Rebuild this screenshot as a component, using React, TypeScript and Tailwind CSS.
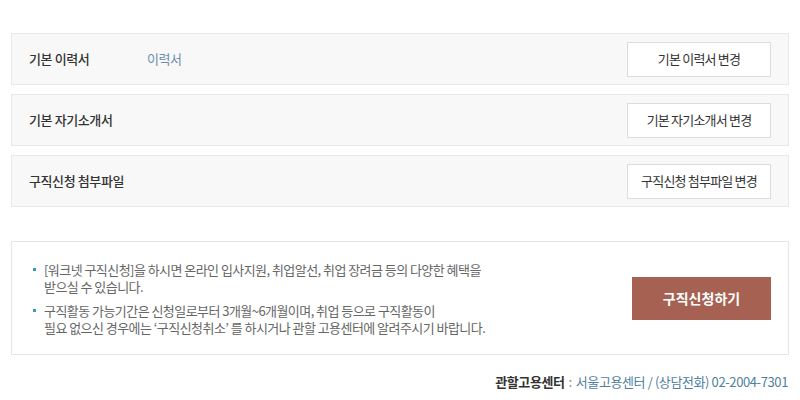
const rows = [
  { label: '기본 이력서', link: '이력서', button: '기본 이력서 변경' },
  { label: '기본 자기소개서', link: '', button: '기본 자기소개서 변경' },
  { label: '구직신청 첨부파일', link: '', button: '구직신청 첨부파일 변경' },
];

const notices = [
  [
    '[워크넷 구직신청]을 하시면 온라인 입사지원, 취업알선, 취업 장려금 등의 다양한 혜택을',
    '받으실 수 있습니다.',
  ],
  [
    '구직활동 가능기간은 신청일로부터 3개월~6개월이며, 취업 등으로 구직활동이',
    '필요 없으신 경우에는 ‘구직신청취소’ 를 하시거나 관할 고용센터에 알려주시기 바랍니다.',
  ],
];

export default function App() {
  return (
    <div className="w-[800px] h-[400px] bg-white px-[11px] pt-[33px] font-['Noto_Sans_CJK_KR','Noto_Sans',sans-serif] text-[13px] text-[#333]">
      <div className="flex flex-col gap-[9px]">
        {rows.map((row) => (
          <div
            key={row.label}
            className="flex h-[52px] items-center border border-[#e9e9e9] bg-[#f8f8f8] pl-[17px] pr-[17px]"
          >
            <span className="w-[118px] font-medium tracking-[-0.4px]">{row.label}</span>
            {row.link && <span className="tracking-[-0.4px] text-[#6a8fae]">{row.link}</span>}
            <button className="ml-auto flex h-[35px] w-[144px] items-center justify-center border border-[#dcdcdc] bg-white tracking-[-0.8px] text-[#333]">
              {row.button}
            </button>
          </div>
        ))}
      </div>

      <div className="mt-[34px] flex h-[114px] items-center border border-[#e5e5e5] bg-white pl-[21px] pr-[17px]">
        <ul className="flex flex-col gap-[7px] text-[#666] leading-[17px] tracking-[-0.55px]">
          {notices.map((lines) => (
            <li key={lines[0]} className="flex">
              <span className="mr-[8px] mt-[7px] h-[3px] w-[3px] shrink-0 bg-[#3a9bb8]" />
              <div className="flex flex-col">
                {lines.map((line) => (
                  <span key={line}>{line}</span>
                ))}
              </div>
            </li>
          ))}
        </ul>
        <button className="ml-auto flex h-[43px] w-[139px] items-center justify-center bg-[#a66153] text-[14px] font-bold text-white">
          구직신청하기
        </button>
      </div>

      <div className="mt-[17px] flex justify-end pr-[1px] text-[13px] tracking-[-0.4px]">
        <span className="font-bold text-[#333]">관할고용센터</span>
        <span className="mx-[4px] text-[#888]">:</span>
        <span className="text-[#4f7fa0]">서울고용센터 / (상담전화) 02-2004-7301</span>
      </div>
    </div>
  );
}
